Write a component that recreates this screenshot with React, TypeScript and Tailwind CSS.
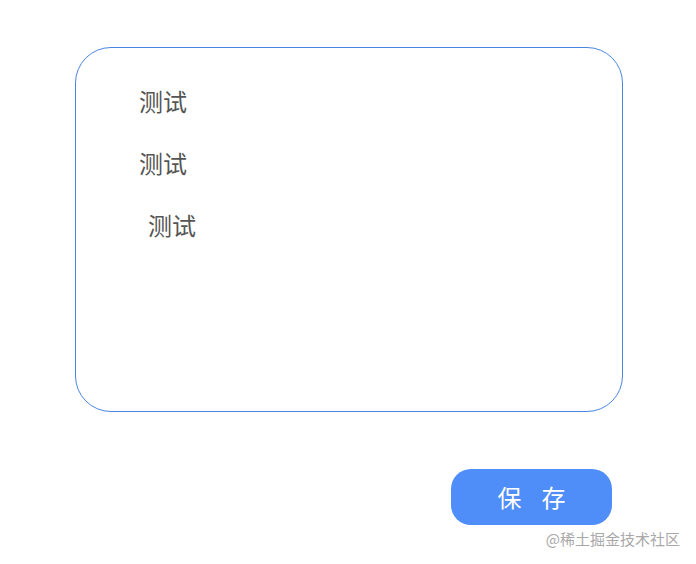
export default function App() {
  const font = { fontFamily: '"Noto Sans CJK SC", "Noto Sans", sans-serif' };
  return (
    <div className="w-[696px] h-[564px] bg-white relative" style={font}>
      <div className="pt-[47px] pl-[75px]">
        <div className="w-[548px] h-[365px] border border-[#4a85e0] rounded-[36px] pt-[33px] pl-[63px] text-[24px] text-[#555555] leading-[40px]">
          <div>测试</div>
          <div className="mt-[22px]">测试</div>
          <div className="mt-[22px] pl-[9px]">测试</div>
        </div>
      </div>
      <div className="flex justify-end pr-[84px] mt-[57px]">
        <button className="w-[161px] h-[56px] rounded-[20px] bg-[#4f8ef8] text-white text-[24px] tracking-[20px] pl-[20px]">
          保存
        </button>
      </div>
      <div className="absolute right-[16px] bottom-[18px] text-[15px] text-[#a8a8a8] leading-none">
        @稀土掘金技术社区
      </div>
    </div>
  );
}
